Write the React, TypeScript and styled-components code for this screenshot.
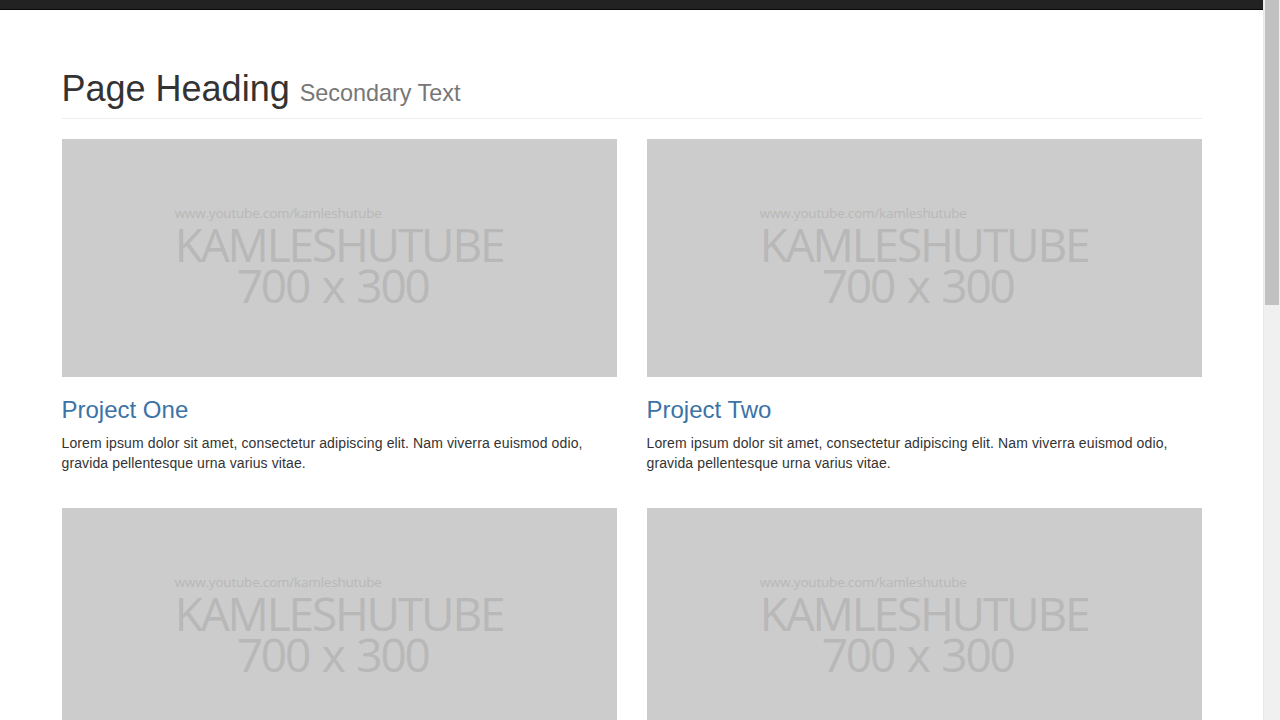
import React from 'react';
import styled, { createGlobalStyle } from 'styled-components';

const GlobalStyle = createGlobalStyle`
  html, body {
    margin: 0;
    padding: 0;
    height: 100%;
    overflow: hidden;
    background: #fff;
  }
  body {
    font-family: "Liberation Sans", Arial, Helvetica, sans-serif;
    font-size: 14px;
    line-height: 1.42857;
    color: #333;
  }
`;

const Frame = styled.div`
  display: flex;
  height: 720px;
  overflow: hidden;
`;

const Viewport = styled.div`
  flex: 1;
  display: flex;
  flex-direction: column;
  min-width: 0;
`;

const TopBar = styled.div`
  height: 10px;
  flex: none;
  background-color: #222;
  border-bottom: 1px solid #080808;
  box-sizing: border-box;
`;

const Container = styled.div`
  width: 1140px;
  margin: 0 auto;
  padding: 0 15px;
`;

const PageHeader = styled.div`
  margin: 59px 0 20px;
  padding-bottom: 9px;
  border-bottom: 1px solid #eee;
`;

const Heading = styled.h1`
  margin: 0;
  font-size: 36px;
  font-weight: 500;
  line-height: 1.1;
  color: #333;
`;

const Secondary = styled.small`
  font-size: 65%;
  font-weight: 400;
  color: #777;
`;

const Grid = styled.div`
  display: grid;
  grid-template-columns: 1fr 1fr;
  column-gap: 30px;
`;

const Item = styled.div`
  margin-bottom: 25px;
`;

const Placeholder = styled.div`
  height: 238px;
  background-color: #ccc;
  display: flex;
  align-items: center;
  justify-content: center;
  font-family: "Open Sans", "DejaVu Sans", sans-serif;
  color: #b8b8b8;
`;

const Stamp = styled.div`
  display: flex;
  flex-direction: column;
  align-items: flex-start;
  margin-top: -4px;
`;

const Url = styled.div`
  font-size: 13.5px;
  line-height: 16px;
  letter-spacing: -0.2px;
  margin-bottom: 3px;
`;

const BigLine = styled.div<{ indent?: number }>`
  font-size: 46px;
  line-height: 41px;
  letter-spacing: -2.2px;
  word-spacing: 3px;
  margin-left: ${props => props.indent || 0}px;
`;

const Title = styled.h3`
  margin: 20px 0 10px;
  font-size: 24px;
  font-weight: 500;
  line-height: 1.1;
  color: #3b73a6;
`;

const Text = styled.p`
  margin: 0 0 10px;
  font-size: 14px;
  line-height: 20px;
  letter-spacing: 0.12px;
  color: #333;
`;

const Scrollbar = styled.div`
  width: 17px;
  flex: none;
  background-color: #f0f0f0;
  border-left: 1px solid #e8e8e8;
  box-sizing: border-box;
  padding: 0 1px 0 1px;
`;

const Thumb = styled.div`
  height: 305px;
  background-color: #c1c1c1;
`;

const lorem =
  'Lorem ipsum dolor sit amet, consectetur adipiscing elit. Nam viverra euismod odio, gravida pellentesque urna varius vitae.';

const projects = [
  { title: 'Project One', text: lorem },
  { title: 'Project Two', text: lorem },
  { title: 'Project Three', text: lorem },
  { title: 'Project Four', text: lorem },
];

const PlaceholderImage: React.FC = () => (
  <Placeholder>
    <Stamp>
      <Url>www.youtube.com/kamleshutube</Url>
      <BigLine>KAMLESHUTUBE</BigLine>
      <BigLine indent={62}>700 x 300</BigLine>
    </Stamp>
  </Placeholder>
);

export default function App() {
  return (
    <>
      <GlobalStyle />
      <Frame>
        <Viewport>
          <TopBar />
          <Container>
            <PageHeader>
              <Heading>
                Page Heading <Secondary>Secondary Text</Secondary>
              </Heading>
            </PageHeader>
            <Grid>
              {projects.map(p => (
                <Item key={p.title}>
                  <PlaceholderImage />
                  <Title>{p.title}</Title>
                  <Text>{p.text}</Text>
                </Item>
              ))}
            </Grid>
          </Container>
        </Viewport>
        <Scrollbar>
          <Thumb />
        </Scrollbar>
      </Frame>
    </>
  );
}
